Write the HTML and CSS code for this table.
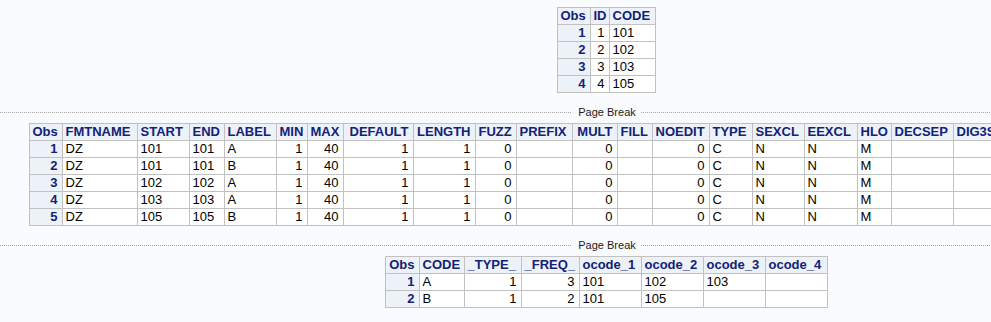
FILE: index.html
```html
<!DOCTYPE html>
<html lang="en">
<head>
<meta charset="utf-8">
<title>SAS Output</title>
<link rel="stylesheet" href="styles.css">
</head>
<body>
<div class="page">
  <table class="grid t-ids">
    <thead>
      <tr><th class="r w33">Obs</th><th class="r w19">ID</th><th class="l w46">CODE</th></tr>
    </thead>
    <tbody>
      <tr><th class="r">1</th><td class="r">1</td><td>101</td></tr>
      <tr><th class="r">2</th><td class="r">2</td><td>102</td></tr>
      <tr><th class="r">3</th><td class="r">3</td><td>103</td></tr>
      <tr><th class="r">4</th><td class="r">4</td><td>105</td></tr>
    </tbody>
  </table>

  <div class="pagebreak"><span class="pb-line"></span><span class="pb-text">Page Break</span><span class="pb-line"></span></div>

  <table class="grid t-fmt">
    <thead>
      <tr>
        <th class="r w33">Obs</th><th class="l w75">FMTNAME</th><th class="l w52">START</th><th class="l w35">END</th><th class="l w52">LABEL</th><th class="r w31">MIN</th><th class="r w36">MAX</th><th class="r w70">DEFAULT</th><th class="r w62">LENGTH</th><th class="r w41">FUZZ</th><th class="l w56">PREFIX</th><th class="r w45">MULT</th><th class="l w35">FILL</th><th class="r w57">NOEDIT</th><th class="l w43">TYPE</th><th class="l w52">SEXCL</th><th class="l w53">EEXCL</th><th class="l w34">HLO</th><th class="l w62">DECSEP</th><th class="l w65">DIG3SEP</th><th class="l w79">DATATYPE</th><th class="l w86">LANGUAGE</th>
      </tr>
    </thead>
    <tbody>
      <tr><th class="r">1</th><td>DZ</td><td>101</td><td>101</td><td>A</td><td class="r">1</td><td class="r">40</td><td class="r">1</td><td class="r">1</td><td class="r">0</td><td></td><td class="r">0</td><td></td><td class="r">0</td><td>C</td><td>N</td><td>N</td><td>M</td><td></td><td></td><td></td><td></td></tr>
      <tr><th class="r">2</th><td>DZ</td><td>101</td><td>101</td><td>B</td><td class="r">1</td><td class="r">40</td><td class="r">1</td><td class="r">1</td><td class="r">0</td><td></td><td class="r">0</td><td></td><td class="r">0</td><td>C</td><td>N</td><td>N</td><td>M</td><td></td><td></td><td></td><td></td></tr>
      <tr><th class="r">3</th><td>DZ</td><td>102</td><td>102</td><td>A</td><td class="r">1</td><td class="r">40</td><td class="r">1</td><td class="r">1</td><td class="r">0</td><td></td><td class="r">0</td><td></td><td class="r">0</td><td>C</td><td>N</td><td>N</td><td>M</td><td></td><td></td><td></td><td></td></tr>
      <tr><th class="r">4</th><td>DZ</td><td>103</td><td>103</td><td>A</td><td class="r">1</td><td class="r">40</td><td class="r">1</td><td class="r">1</td><td class="r">0</td><td></td><td class="r">0</td><td></td><td class="r">0</td><td>C</td><td>N</td><td>N</td><td>M</td><td></td><td></td><td></td><td></td></tr>
      <tr><th class="r">5</th><td>DZ</td><td>105</td><td>105</td><td>B</td><td class="r">1</td><td class="r">40</td><td class="r">1</td><td class="r">1</td><td class="r">0</td><td></td><td class="r">0</td><td></td><td class="r">0</td><td>C</td><td>N</td><td>N</td><td>M</td><td></td><td></td><td></td><td></td></tr>
    </tbody>
  </table>

  <div class="pagebreak"><span class="pb-line"></span><span class="pb-text">Page Break</span><span class="pb-line"></span></div>

  <table class="grid t-codes">
    <thead>
      <tr><th class="r w34">Obs</th><th class="l w45">CODE</th><th class="l w57">_TYPE_</th><th class="r w58">_FREQ_</th><th class="l w62">ocode_1</th><th class="l w62">ocode_2</th><th class="l w62">ocode_3</th><th class="l w62">ocode_4</th></tr>
    </thead>
    <tbody>
      <tr><th class="r">1</th><td>A</td><td class="r">1</td><td class="r">3</td><td>101</td><td>102</td><td>103</td><td></td></tr>
      <tr><th class="r">2</th><td>B</td><td class="r">1</td><td class="r">2</td><td>101</td><td>105</td><td></td><td></td></tr>
    </tbody>
  </table>
</div>
</body>
</html>
```

FILE: styles.css
```css
html, body {
  margin: 0;
  padding: 0;
  background: #fafbfe;
}

body {
  font-family: "Liberation Sans", Arial, sans-serif;
  font-size: 13px;
  color: #000;
}

.page {
  width: 1212px;
  padding-top: 7px;
}

.grid {
  margin: 0 auto;
  table-layout: fixed;
  box-sizing: border-box;
  border-collapse: separate;
  border-spacing: 0;
  border-top: 1px solid #c1c1c1;
  border-left: 1px solid #c1c1c1;
}

.t-ids { width: 99px; }
.t-fmt { width: 1155px; }
.t-codes { width: 443px; }

.grid th,
.grid td {
  box-sizing: border-box;
  height: 17px;
  padding: 0 4px 0 3px;
  line-height: 16px;
  border-right: 1px solid #c1c1c1;
  border-bottom: 1px solid #c1c1c1;
  white-space: nowrap;
  overflow: hidden;
  text-align: left;
  vertical-align: middle;
}

.grid th {
  background: #edf2f9;
  color: #112277;
  font-weight: bold;
}

.grid td {
  background: #ffffff;
  color: #000;
  font-weight: normal;
}

.grid .r { text-align: right; }
.grid .l { text-align: left; }

.w19 { width: 19px; }
.w31 { width: 31px; }
.w33 { width: 33px; }
.w34 { width: 34px; }
.w35 { width: 35px; }
.w36 { width: 36px; }
.w41 { width: 41px; }
.w43 { width: 43px; }
.w45 { width: 45px; }
.w46 { width: 46px; }
.w52 { width: 52px; }
.w53 { width: 53px; }
.w56 { width: 56px; }
.w57 { width: 57px; }
.w58 { width: 58px; }
.w62 { width: 62px; }
.w65 { width: 65px; }
.w70 { width: 70px; }
.w75 { width: 75px; }
.w79 { width: 79px; }
.w86 { width: 86px; }

.pagebreak {
  display: flex;
  align-items: center;
  height: 13px;
  margin: 13px 0 4px;
}

.pb-line {
  flex: 1;
  border-top: 1px dotted #a6a6a6;
}

.pb-text {
  font-size: 11px;
  line-height: 13px;
  color: #1a1a1a;
  padding: 0 5px 0 7px;
}
```
